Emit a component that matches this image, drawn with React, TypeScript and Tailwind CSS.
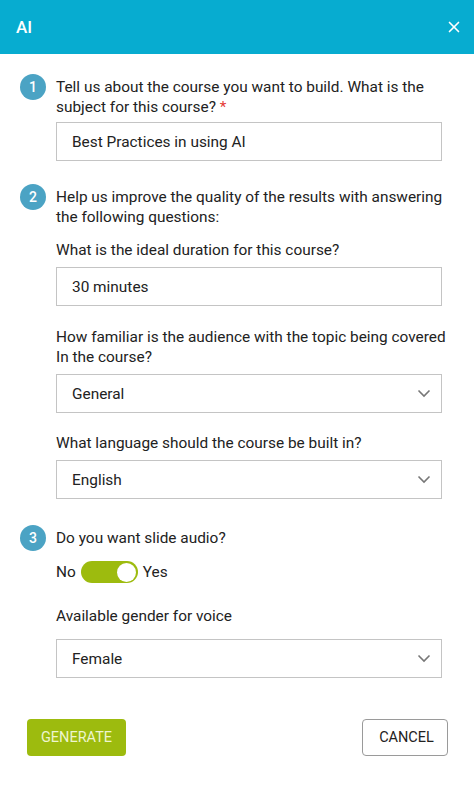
import { X } from "lucide-react";

const Step = ({ n }: { n: number }) => (
    <div className="mt-[-3px] flex h-[26px] w-[26px] shrink-0 items-center justify-center rounded-full bg-[#4ba3c4] text-[14px] font-medium text-white">
        {n}
    </div>
)

const TextBox = ({ value, className = "" }: { value: string; className?: string }) => (
    <div className={`flex h-[39px] items-center border border-[#c4c4c4] pl-[15px] ${className}`}>
        {value}
    </div>
)

const SelectBox = ({ value, className = "" }: { value: string; className?: string }) => (
    <div className={`flex h-[39px] items-center justify-between border border-[#c4c4c4] pl-[15px] pr-[10px] ${className}`}>
        <span>{value}</span>
        <svg width="14" height="9" viewBox="0 0 14 9" fill="none">
            <polyline points="1.5,1.5 7,7 12.5,1.5" stroke="#777" strokeWidth="1.6" />
        </svg>
    </div>
)

export default function App() {
    return (
        <div className="h-[785px] w-[474px] bg-white font-['Roboto','Liberation_Sans',sans-serif] text-[15.4px] leading-[20px] text-[#222]">
            {/* Header */}
            <div className="flex h-[54px] items-center justify-between bg-[#07acd0] pl-4 pr-[11px]">
                <span className="text-[17px] font-medium text-white">AI</span>
                <X className="size-[18px] text-white" strokeWidth={2.2} />
            </div>

            <div className="pl-5 pr-8 pt-[23px]">
                {/* Step 1 */}
                <div className="flex gap-[10px]">
                    <Step n={1} />
                    <div className="flex-1">
                        <p className="-mr-5">
                            Tell us about the course you want to build. What is the
                            <br />
                            subject for this course? <span className="text-[#e53935]">*</span>
                        </p>
                        <TextBox value="Best Practices in using AI" className="mt-[5px]" />
                    </div>
                </div>

                {/* Step 2 */}
                <div className="mt-[26px] flex gap-[10px]">
                    <Step n={2} />
                    <div className="flex-1">
                        <p className="-mr-5">Help us improve the quality of the results with answering the following questions:</p>
                        <p className="mt-[13px]">What is the ideal duration for this course?</p>
                        <TextBox value="30 minutes" className="mt-[7px]" />
                        <p className="-mr-5 mt-[21px]">How familiar is the audience with the topic being covered In the course?</p>
                        <SelectBox value="General" className="mt-[7px]" />
                        <p className="mt-[20px]">What language should the course be built in?</p>
                        <SelectBox value="English" className="mt-[7px]" />
                    </div>
                </div>

                {/* Step 3 */}
                <div className="mt-[29px] flex gap-[10px]">
                    <Step n={3} />
                    <div className="flex-1">
                        <p>Do you want slide audio?</p>
                        <div className="mt-[13px] flex h-[22px] items-center gap-[5px]">
                            <span>No</span>
                            <div className="flex h-[22px] w-[57px] items-center justify-end rounded-full bg-[#9dbb0e] pr-[2px]">
                                <div className="h-[19px] w-[19px] rounded-full bg-white" />
                            </div>
                            <span>Yes</span>
                        </div>
                        <p className="mt-[23px]">Available gender for voice</p>
                        <SelectBox value="Female" className="mt-[13px]" />
                    </div>
                </div>
            </div>

            {/* Footer buttons */}
            <div className="mt-[41px] flex items-center justify-between pl-[27px] pr-[26px]">
                <button className="flex h-[37px] w-[99px] items-center justify-center rounded-[4px] bg-[#9dbb0e] text-[14.5px] text-[#eef5cf]">
                    GENERATE
                </button>
                <button className="flex h-[37px] w-[86px] items-center justify-center rounded-[4px] border border-[#9a9a9a] bg-white pl-[3px] text-[14.5px] text-[#222]">
                    CANCEL
                </button>
            </div>
        </div>
    )
}
